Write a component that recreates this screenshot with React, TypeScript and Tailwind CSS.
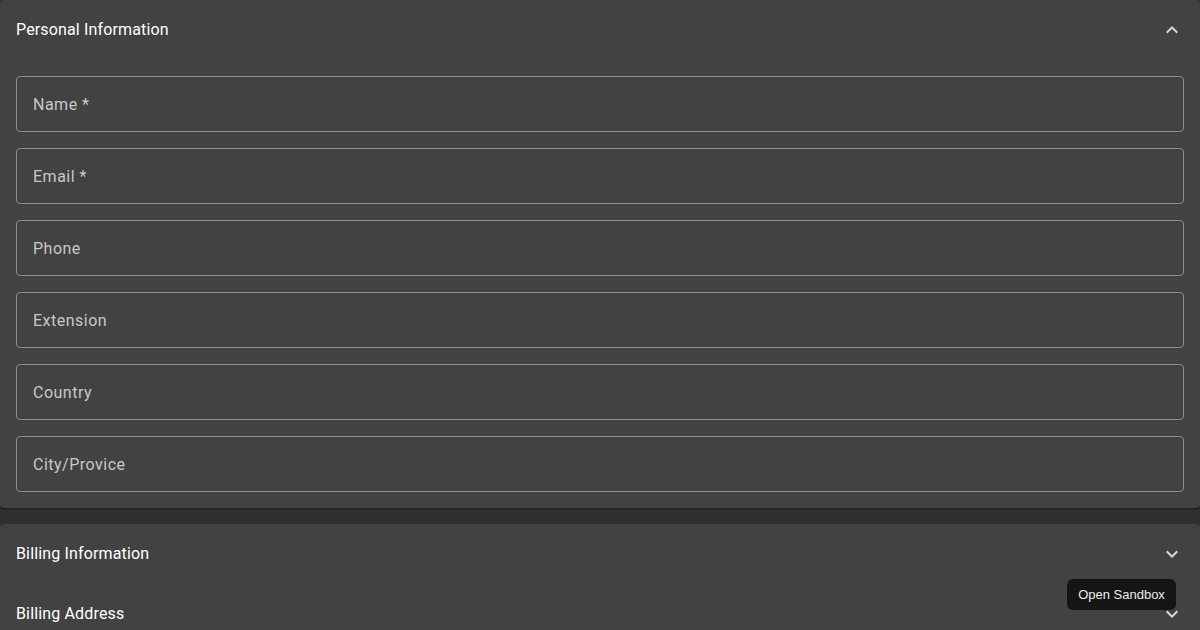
const fields = ["Name *", "Email *", "Phone", "Extension", "Country", "City/Provice"];

function Chevron({ up }: { up?: boolean }) {
  return (
    <svg viewBox="0 0 24 24" className={`h-6 w-6 fill-white/80 ${up ? "rotate-180" : ""}`}>
      <path d="M16.59 8.59 12 13.17 7.41 8.59 6 10l6 6 6-6z" />
    </svg>
  );
}

function Summary({ title, up, height }: { title: string; up?: boolean; height: string }) {
  return (
    <div className={`flex items-start justify-between px-4 ${height}`}>
      <span className="pt-[18px] text-base leading-6 tracking-[0.15px] text-white">{title}</span>
      <span className="pt-[18px]">
        <Chevron up={up} />
      </span>
    </div>
  );
}

export default function App() {
  return (
    <div className="relative h-[630px] overflow-hidden bg-[#303030] font-['Roboto',sans-serif]">
      <div className="rounded bg-[#424242] shadow-[0_2px_1px_-1px_rgba(0,0,0,0.2),0_1px_1px_0_rgba(0,0,0,0.14),0_1px_3px_0_rgba(0,0,0,0.12)]">
        <Summary title="Personal Information" up height="h-16" />
        <div className="flex flex-col gap-4 px-4 pt-3 pb-4">
          {fields.map((f) => (
            <div
              key={f}
              className="flex h-14 items-center rounded border border-[#8e8e8e] pl-4 pt-0.5 text-base tracking-[0.5px] text-[#c8c8c8]"
            >
              {f}
            </div>
          ))}
        </div>
      </div>

      <div className="mt-4 rounded-t bg-[#424242] shadow-[0_2px_1px_-1px_rgba(0,0,0,0.2),0_1px_1px_0_rgba(0,0,0,0.14),0_1px_3px_0_rgba(0,0,0,0.12)]">
        <Summary title="Billing Information" height="h-[60px]" />
        <Summary title="Billing Address" height="h-16" />
      </div>

      <div className="absolute left-[1067px] top-[579px] flex h-[31px] w-[109px] items-center justify-center rounded-md bg-[#151515] font-['Liberation_Sans',Arial,sans-serif] text-[13px] text-[#ececec]">
        Open Sandbox
      </div>
    </div>
  );
}
